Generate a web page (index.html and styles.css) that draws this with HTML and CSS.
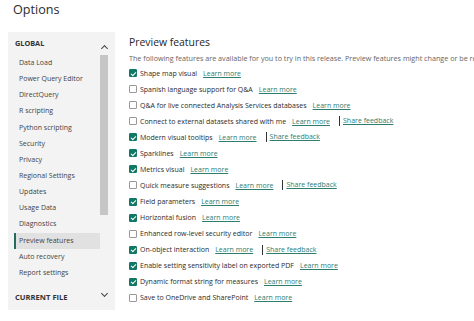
FILE: index.html
```html
<!DOCTYPE html>
<html lang="en">
<head>
    <meta charset="UTF-8">
    <title>Options</title>
    <link rel="stylesheet" href="styles.css">
</head>
<body>
    <h1 class="title">Options</h1>
    <div class="main">
        <div class="sidebar">
            <div class="nav">
                <div class="group">GLOBAL</div>
                <div class="item">Data Load</div>
                <div class="item">Power Query Editor</div>
                <div class="item">DirectQuery</div>
                <div class="item">R scripting</div>
                <div class="item">Python scripting</div>
                <div class="item">Security</div>
                <div class="item">Privacy</div>
                <div class="item">Regional Settings</div>
                <div class="item">Updates</div>
                <div class="item">Usage Data</div>
                <div class="item">Diagnostics</div>
                <div class="item active">Preview features</div>
                <div class="item">Auto recovery</div>
                <div class="item">Report settings</div>
                <div class="group current">CURRENT FILE</div>
            </div>
            <div class="scrollbar">
                <span class="arrow up"></span>
                <div class="thumb"></div>
                <span class="arrow down"></span>
            </div>
        </div>
        <div class="content">
            <h2 class="heading">Preview features</h2>
            <p class="desc">The following features are available for you to try in this release. Preview features might change or be removed in future releases.</p>
            <div class="row"><span class="box on"></span>Shape map visual<a class="link">Learn more</a></div>
            <div class="row"><span class="box"></span>Spanish language support for Q&amp;A<a class="link">Learn more</a></div>
            <div class="row"><span class="box"></span>Q&amp;A for live connected Analysis Services databases<a class="link">Learn more</a></div>
            <div class="row"><span class="box"></span>Connect to external datasets shared with me<a class="link">Learn more</a><a class="link share">Share feedback</a></div>
            <div class="row"><span class="box on"></span>Modern visual tooltips<a class="link">Learn more</a><a class="link share">Share feedback</a></div>
            <div class="row"><span class="box on"></span>Sparklines<a class="link">Learn more</a></div>
            <div class="row"><span class="box on"></span>Metrics visual<a class="link">Learn more</a></div>
            <div class="row"><span class="box"></span>Quick measure suggestions<a class="link">Learn more</a><a class="link share">Share feedback</a></div>
            <div class="row"><span class="box on"></span>Field parameters<a class="link">Learn more</a></div>
            <div class="row"><span class="box on"></span>Horizontal fusion<a class="link">Learn more</a></div>
            <div class="row"><span class="box"></span>Enhanced row-level security editor<a class="link">Learn more</a></div>
            <div class="row"><span class="box on"></span>On-object interaction<a class="link">Learn more</a><a class="link share">Share feedback</a></div>
            <div class="row"><span class="box on"></span>Enable setting sensitivity label on exported PDF<a class="link">Learn more</a></div>
            <div class="row"><span class="box on"></span>Dynamic format string for measures<a class="link">Learn more</a></div>
            <div class="row"><span class="box"></span>Save to OneDrive and SharePoint<a class="link">Learn more</a></div>
        </div>
    </div>
</body>
</html>
```

FILE: styles.css
```css
body {
    margin: 0;
    background-color: #fff;
    font-family: "Open Sans", "Noto Sans", sans-serif;
    color: #333;
    overflow: hidden;
}

.title {
    margin: 0;
    padding: 1px 0 0 13px;
    height: 31px;
    line-height: 18px;
    font-size: 12.6px;
    font-weight: 400;
    color: #2b2b2b;
}

.main {
    display: flex;
}

.sidebar {
    display: flex;
    margin-left: 8px;
    width: 107px;
    height: 278px;
    background-color: #f3f3f3;
}

.nav {
    flex: 1;
    padding-top: 3px;
}

.group {
    padding-left: 7px;
    height: 20px;
    line-height: 16px;
    font-size: 7.3px;
    font-weight: 700;
    color: #333;
}

.group.current {
    height: 16px;
    margin-top: 8px;
    font-size: 7.6px;
}

.item {
    margin-left: 6px;
    padding-left: 3px;
    height: 16.15px;
    line-height: 16px;
    font-size: 7px;
    color: #444;
    white-space: nowrap;
    border-left: 2px solid transparent;
}

.item.active {
    background-color: #e1e1e1;
    border-left-color: #256a5c;
}

.scrollbar {
    width: 8px;
    margin-right: 7px;
    display: flex;
    flex-direction: column;
    align-items: center;
}

.arrow {
    width: 4px;
    height: 4px;
    border-left: 1.5px solid #444;
    border-top: 1.5px solid #444;
}

.arrow.up {
    margin-top: 14px;
    transform: rotate(45deg);
}

.arrow.down {
    margin-top: 76px;
    transform: rotate(225deg);
}

.thumb {
    margin-top: 4px;
    width: 8px;
    height: 160px;
    background-color: #c6c6c6;
}

.content {
    padding-left: 14px;
    flex: 1;
    min-width: 0;
}

.heading {
    margin: 0;
    padding-top: 2px;
    height: 17px;
    line-height: 16px;
    font-size: 10.4px;
    font-weight: 400;
    color: #252525;
}

.desc {
    margin: 0;
    height: 14px;
    line-height: 14px;
    font-size: 7.2px;
    color: #666;
    white-space: nowrap;
    overflow: hidden;
}

.row {
    display: flex;
    align-items: center;
    height: 16.07px;
    font-size: 7px;
    color: #2b2b2b;
    white-space: nowrap;
}

.box {
    width: 8px;
    height: 8px;
    margin-right: 3px;
    border: 1px solid #999;
    border-radius: 1px;
    box-sizing: border-box;
    background-color: #fff;
    position: relative;
}

.box.on {
    background-color: #117865;
    border-color: #117865;
}

.box.on::after {
    content: "";
    position: absolute;
    left: 2px;
    top: 0.5px;
    width: 2px;
    height: 4px;
    border-right: 1.2px solid #fff;
    border-bottom: 1.2px solid #fff;
    transform: rotate(45deg);
}

.link {
    margin-left: 6px;
    color: #2e7d70;
    text-decoration: underline;
}

.share {
    margin-left: 9px;
    padding-left: 3px;
    border-left: 1px solid #333;
    line-height: 10px;
}
```
